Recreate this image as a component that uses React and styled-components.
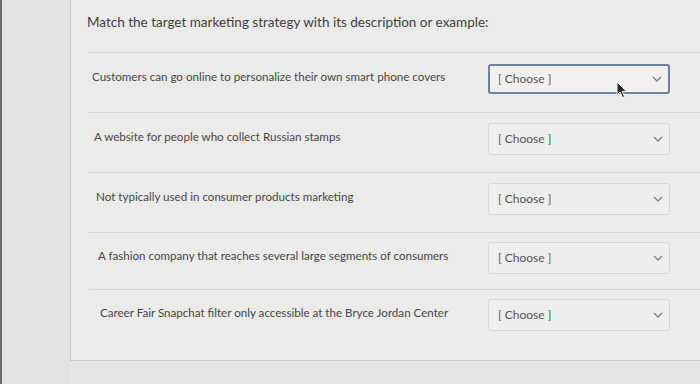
import React from "react";
import styled, { createGlobalStyle } from "styled-components";

const Global = createGlobalStyle`
  html, body { margin: 0; padding: 0; }
  body {
    background: #e6e6e4;
    font-family: Lato, "Open Sans", "Liberation Sans", sans-serif;
    width: 700px;
    height: 384px;
    overflow: hidden;
  }
`;

const Page = styled.div`
  display: flex;
  height: 384px;
  width: 700px;
`;

const Edge = styled.div`
  width: 2px;
  background: #6a6a6a;
  flex: none;
`;

const Gutter = styled.div`
  width: 68px;
  flex: none;
  background: #e3e3e1;
`;

const Column = styled.div`
  flex: 1;
  display: flex;
  flex-direction: column;
`;

const Card = styled.div`
  background: #ebebe9;
  border-left: 1px solid #c9c9c7;
  border-bottom: 1px solid #c9c9c7;
  padding-bottom: 14px;
`;

const Title = styled.div`
  height: 52px;
  display: flex;
  align-items: center;
  padding-left: 16px;
  padding-bottom: 8px;
  box-sizing: border-box;
  font-size: 13.5px;
  color: #3e3e3e;
`;

const Row = styled.div`
  position: relative;
  height: ${(p) => p.$h}px;
  margin-left: 18px;
  border-top: 1px solid #d6d6d4;
  display: flex;
  align-items: center;
  box-sizing: border-box;
  padding: 0 0 ${(p) => (p.$h > 58 ? 8 : 7)}px ${(p) => p.$indent}px;
`;

const Label = styled.div`
  width: ${(p) => 399 - p.$indent}px;
  flex: none;
  font-size: 11.6px;
  color: #474747;
  margin-top: -4px;
`;

const Select = styled.div`
  width: 182px;
  height: ${(p) => (p.$focused ? 30 : 32)}px;
  box-sizing: border-box;
  border: ${(p) => (p.$focused ? "2px solid #6f80a6" : "1px solid #d8d8d6")};
  border-radius: 3px;
  background: ${(p) => (p.$focused ? "#f1f1ef" : "#eeeeec")};
  display: flex;
  align-items: center;
  justify-content: space-between;
  padding: 0 6px 0 ${(p) => (p.$focused ? 8 : 9)}px;
  font-size: 12px;
  color: #555;
`;

const Chevron = styled.svg`
  width: 10px;
  height: 6px;
  flex: none;
`;

const Cursor = styled.svg`
  position: absolute;
  left: 527px;
  top: 28px;
  width: 12px;
  height: 18px;
`;

const rows = [
  "Customers can go online to personalize their own smart phone covers",
  "A website for people who collect Russian stamps",
  "Not typically used in consumer products marketing",
  "A fashion company that reaches several large segments of consumers",
  "Career Fair Snapchat filter only accessible at the Bryce Jordan Center",
];

const heights = [60, 60, 60, 57, 57];

export default function App() {
  return (
    <>
      <Global />
      <Page>
        <Edge />
        <Gutter />
        <Column>
          <Card>
            <Title>Match the target marketing strategy with its description or example:</Title>
            {rows.map((t, i) => (
              <Row key={i} $indent={3 + i * 2} $h={heights[i]}>
                <Label $indent={3 + i * 2}>{t}</Label>
                <Select $focused={i === 0}>
                  <span>[ Choose ]</span>
                  <Chevron viewBox="0 0 10 6">
                    <path d="M1 1 L5 5 L9 1" fill="none" stroke="#7a7f8a" strokeWidth="1.3" />
                  </Chevron>
                </Select>
                {i === 0 && (
                  <Cursor viewBox="0 0 12 18">
                    <path
                      d="M1 1 L1 14 L4 11 L6.5 16.5 L8.5 15.6 L6.2 10.3 L10.5 10.3 Z"
                      fill="#2a2a2a"
                      stroke="#f2f2f2"
                      strokeWidth="1"
                    />
                  </Cursor>
                )}
              </Row>
            ))}
          </Card>
        </Column>
      </Page>
    </>
  );
}
